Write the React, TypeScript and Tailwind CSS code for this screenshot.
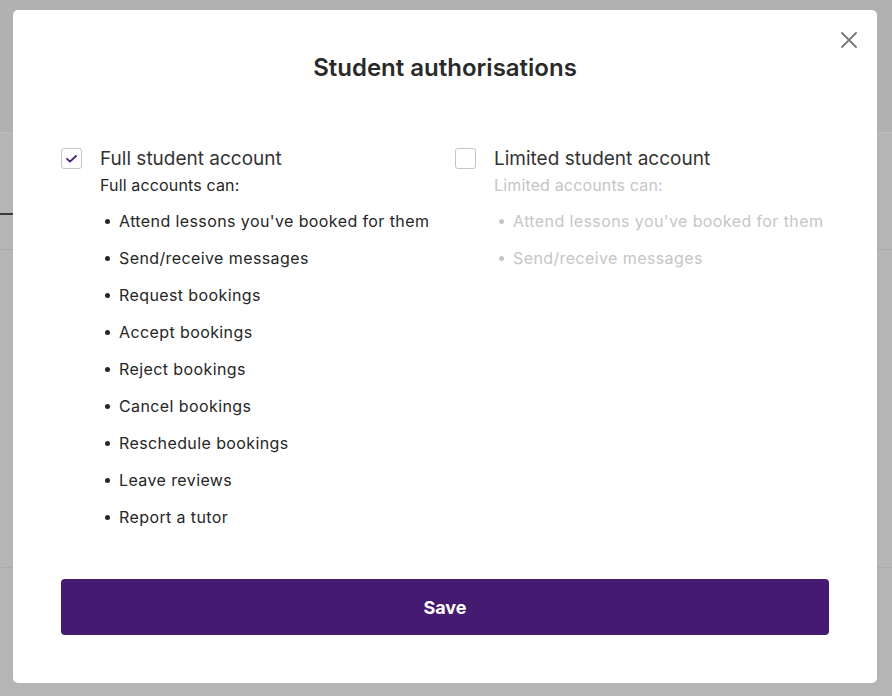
const fullItems = [
  "Attend lessons you've booked for them",
  'Send/receive messages',
  'Request bookings',
  'Accept bookings',
  'Reject bookings',
  'Cancel bookings',
  'Reschedule bookings',
  'Leave reviews',
  'Report a tutor',
]

const limitedItems = ["Attend lessons you've booked for them", 'Send/receive messages']

function Check({ checked }: { checked: boolean }) {
  return (
    <span className="mt-[2px] flex h-[21px] w-[21px] shrink-0 items-center justify-center rounded-[3px] border border-[#c4c4c4] bg-white">
      {checked && (
        <svg width="11" height="8" viewBox="0 0 11 8" fill="none">
          <path d="M1 3.8 L4 6.6 L10 1" stroke="#4a1c7c" strokeWidth="1.8" strokeLinecap="round" strokeLinejoin="round" />
        </svg>
      )}
    </span>
  )
}

function AccountOption({
  title,
  intro,
  items,
  checked,
  muted,
}: {
  title: string
  intro: string
  items: string[]
  checked: boolean
  muted: boolean
}) {
  const textColor = muted ? 'text-[#c6c6c6]' : 'text-[#262626]'
  const dotColor = muted ? 'bg-[#c6c6c6]' : 'bg-[#262626]'
  return (
    <div className="flex gap-[18px]">
      <Check checked={checked} />
      <div className="flex flex-col">
        <span className="mt-[1px] text-[19px] leading-6 text-[#333]">{title}</span>
        <span className={`mt-[3px] text-[16px] leading-[22px] tracking-[0.15px] ${textColor}`}>{intro}</span>
        <ul className="mt-[14px] flex flex-col gap-[15px]">
          {items.map((item) => (
            <li key={item} className={`flex items-center text-[16px] leading-[22px] tracking-[0.4px] ${textColor}`}>
              <span className={`ml-[5px] mr-[9px] h-[5px] w-[5px] rounded-full ${dotColor}`} />
              {item}
            </li>
          ))}
        </ul>
      </div>
    </div>
  )
}

export default function App() {
  return (
    <div className="relative h-[696px] w-[892px] overflow-hidden bg-[#b5b5b5] font-['Inter','Noto_Sans',sans-serif]">
      {/* page behind the overlay */}
      <div className="h-[133px] border-b border-[#bcbcbc] bg-[#b1b1b1]" />
      <div className="h-[82px] w-[60px] border-b-2 border-[#3a3a3a]" />
      <div className="h-[35px] border-b border-[#a9a9a9]" />
      <div className="h-[318px] border-b border-[#ababab]" />

      {/* modal */}
      <div className="absolute left-[13px] top-[10px] flex h-[673px] w-[864px] flex-col rounded-[5px] bg-white px-12 pt-[42px]">
        <button className="absolute right-[20px] top-[22px] text-[#777]">
          <svg width="16" height="16" viewBox="0 0 16 16" fill="none">
            <path d="M1 1 L15 15 M15 1 L1 15" stroke="currentColor" strokeWidth="1.8" strokeLinecap="round" />
          </svg>
        </button>
        <h1 className="text-center text-[24px] font-semibold leading-8 text-[#2a2a2a]">Student authorisations</h1>

        <div className="mt-[62px] grid grid-cols-[394px_1fr]">
          <AccountOption
            title="Full student account"
            intro="Full accounts can:"
            items={fullItems}
            checked
            muted={false}
          />
          <AccountOption
            title="Limited student account"
            intro="Limited accounts can:"
            items={limitedItems}
            checked={false}
            muted
          />
        </div>

        <button className="mt-[51px] h-[56px] w-full rounded-[4px] bg-[#451b72] text-[18px] font-bold text-white">
          Save
        </button>
      </div>
    </div>
  )
}
